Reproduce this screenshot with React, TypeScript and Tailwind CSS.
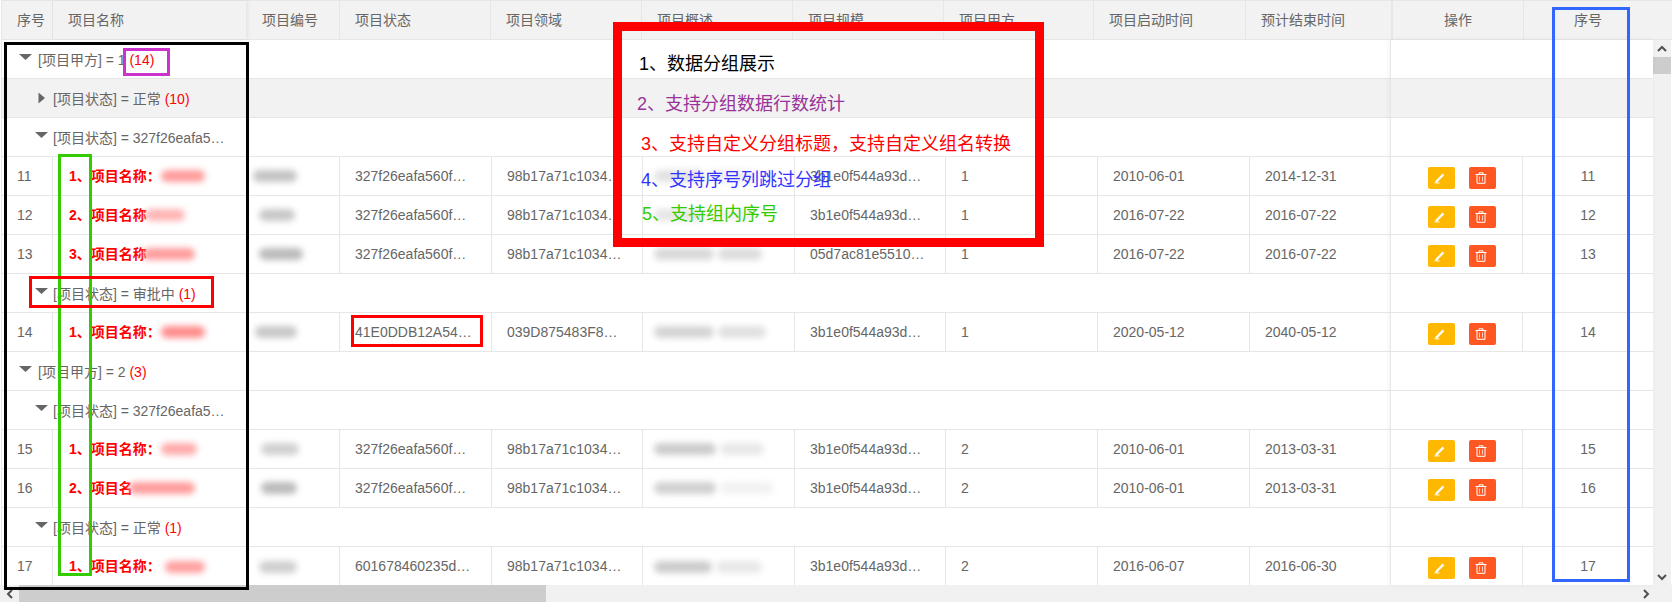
import type { ReactNode } from "react";

type Row =
  | { kind: "group"; level: 1 | 2; title: string; count?: number; closed?: boolean }
  | {
      kind: "data";
      no: number;
      index: number;
      label: string;
      nameBlob: string;
      codeBlob: string;
      status: string;
      domain: string;
      blobA: string;
      blobB: string;
      scale: string;
      party: number;
      start: string;
      end: string;
    };

const STATUS = "327f26eafa560f…";
const DOMAIN = "98b17a71c1034…";
const SCALE = "3b1e0f544a93d…";

const rows: Row[] = [
  { kind: "group", level: 1, title: "[项目甲方] = 1", count: 14 },
  { kind: "group", level: 2, title: "[项目状态] = 正常", count: 10, closed: true },
  { kind: "group", level: 2, title: "[项目状态] = 327f26eafa5…" },
  { kind: "data", no: 11, index: 1, label: "项目名称：", nameBlob: "w-[44px] bg-[#ff9c9c]", codeBlob: "ml-[6px] w-[44px] bg-[#c4c4c4]", status: STATUS, domain: DOMAIN, blobA: "w-[50px] bg-[#e2e2e2]", blobB: "w-[50px] bg-[#efefef]", scale: SCALE, party: 1, start: "2010-06-01", end: "2014-12-31" },
  { kind: "data", no: 12, index: 2, label: "项目名称", nameBlob: "-ml-[2px] w-[40px] bg-[#ffb4b4]", codeBlob: "ml-[12px] w-[36px] bg-[#c8c8c8]", status: STATUS, domain: DOMAIN, blobA: "w-[50px] bg-[#e6e6e6]", blobB: "w-[50px] bg-[#f2f2f2]", scale: SCALE, party: 1, start: "2016-07-22", end: "2016-07-22" },
  { kind: "data", no: 13, index: 3, label: "项目名称", nameBlob: "-ml-[4px] w-[52px] bg-[#ff9c9c]", codeBlob: "ml-[12px] w-[44px] bg-[#bbbbbb]", status: STATUS, domain: DOMAIN, blobA: "w-[60px] bg-[#d8d8d8]", blobB: "w-[44px] bg-[#dcdcdc]", scale: "05d7ac81e5510…", party: 1, start: "2016-07-22", end: "2016-07-22" },
  { kind: "group", level: 2, title: "[项目状态] = 审批中", count: 1 },
  { kind: "data", no: 14, index: 1, label: "项目名称：", nameBlob: "w-[44px] bg-[#ff8c8c]", codeBlob: "ml-[8px] w-[42px] bg-[#c8c8c8]", status: "41E0DDB12A54…", domain: "039D875483F8…", blobA: "w-[60px] bg-[#d4d4d4]", blobB: "w-[48px] bg-[#e0e0e0]", scale: SCALE, party: 1, start: "2020-05-12", end: "2040-05-12" },
  { kind: "group", level: 1, title: "[项目甲方] = 2", count: 3 },
  { kind: "group", level: 2, title: "[项目状态] = 327f26eafa5…" },
  { kind: "data", no: 15, index: 1, label: "项目名称：", nameBlob: "w-[36px] bg-[#ffaaaa]", codeBlob: "ml-[14px] w-[38px] bg-[#d0d0d0]", status: STATUS, domain: DOMAIN, blobA: "w-[62px] bg-[#cccccc]", blobB: "w-[44px] bg-[#e8e8e8]", scale: SCALE, party: 2, start: "2010-06-01", end: "2013-03-31" },
  { kind: "data", no: 16, index: 2, label: "项目名", nameBlob: "-ml-[4px] w-[66px] bg-[#ff9c9c]", codeBlob: "ml-[14px] w-[36px] bg-[#bbbbbb]", status: STATUS, domain: DOMAIN, blobA: "w-[62px] bg-[#d0d0d0]", blobB: "w-[54px] bg-[#f2f2f2]", scale: SCALE, party: 2, start: "2010-06-01", end: "2013-03-31" },
  { kind: "group", level: 2, title: "[项目状态] = 正常", count: 1 },
  { kind: "data", no: 17, index: 1, label: "项目名称：", nameBlob: "ml-[4px] w-[40px] bg-[#ffa0a0]", codeBlob: "ml-[12px] w-[38px] bg-[#cfcfcf]", status: "601678460235d…", domain: DOMAIN, blobA: "w-[58px] bg-[#cccccc]", blobB: "w-[46px] bg-[#e8e8e8]", scale: SCALE, party: 2, start: "2016-06-07", end: "2016-06-30" },
];

const headCols = [
  { label: "序号", width: "w-[51px]" },
  { label: "项目名称", width: "w-[194px]" },
  { label: "项目编号", width: "w-[93px]" },
  { label: "项目状态", width: "w-[151px]" },
  { label: "项目领域", width: "w-[151px]" },
  { label: "项目概述", width: "w-[151px]" },
  { label: "项目规模", width: "w-[151px]" },
  { label: "项目甲方", width: "w-[150px]" },
  { label: "项目启动时间", width: "w-[152px]" },
  { label: "预计结束时间", width: "w-[146px]" },
];

function Cell({ width, children }: { width: string; children?: ReactNode }) {
  return (
    <div className={`flex h-full shrink-0 items-center border-r border-[#e6e6e6] pl-[15px] ${width}`}>
      {children}
    </div>
  );
}

function Blob({ className }: { className: string }) {
  return <span className={`inline-block h-[12px] shrink-0 rounded-full blur-[3px] ${className}`} />;
}

function GroupTitle({ row }: { row: Extract<Row, { kind: "group" }> }) {
  return (
    <div className={`flex h-full w-[245px] items-center ${row.level === 1 ? "pl-[17px]" : "pl-[33px]"}`}>
      {row.closed ? (
        <svg width="13" height="12" viewBox="0 0 13 12" className="shrink-0">
          <polygon points="3.5,0.5 10,6 3.5,11.5" fill="#666" />
        </svg>
      ) : (
        <svg width="13" height="12" viewBox="0 0 13 12" className="-mt-[5px] shrink-0">
          <polygon points="0,3 13,3 6.5,9" fill="#666" />
        </svg>
      )}
      <span className={`pt-[3px] ${row.level === 1 ? "ml-[6px]" : "ml-[5px]"}`}>
        {row.title}
        {row.count !== undefined && (
          <>
            {" "}
            <span className="text-[#ff0000]">({row.count})</span>
          </>
        )}
      </span>
    </div>
  );
}

function MainRow({ row, last }: { row: Row; last: boolean }) {
  if (row.kind === "group") {
    return (
      <div className={`h-[39px] border-b border-[#e6e6e6] ${row.closed ? "bg-[#f2f2f2]" : "bg-white"}`}>
        <GroupTitle row={row} />
      </div>
    );
  }
  return (
    <div className={`flex h-[39px] ${last ? "" : "border-b border-[#e6e6e6]"}`}>
      <div className="flex h-full w-[51px] shrink-0 items-center border-r border-[#e6e6e6] pl-[15px]">{row.no}</div>
      <div className="flex h-full w-[194px] shrink-0 items-center overflow-hidden pl-[16px] font-bold text-[#ff0000]">
        <span className="shrink-0">
          {row.index}、{row.label}
        </span>
        <Blob className={row.nameBlob} />
      </div>
      <div className="flex h-full w-[93px] shrink-0 items-center border-r border-[#e6e6e6]">
        <Blob className={row.codeBlob} />
      </div>
      <Cell width="w-[152px]">{row.status}</Cell>
      <Cell width="w-[151px]">{row.domain}</Cell>
      <div className="flex h-full w-[152px] shrink-0 items-center gap-[4px] border-r border-[#e6e6e6] pl-[11px]">
        <Blob className={row.blobA} />
        <Blob className={row.blobB} />
      </div>
      <Cell width="w-[151px]">{row.scale}</Cell>
      <Cell width="w-[152px]">{row.party}</Cell>
      <Cell width="w-[152px]">{row.start}</Cell>
      <div className="flex h-full flex-1 items-center pl-[15px]">{row.end}</div>
    </div>
  );
}

function PencilIcon() {
  return (
    <svg width="12" height="12" viewBox="0 0 12 12">
      <path d="M1 10.5 L1.6 8.7 L8.6 1.5 L10.3 3.2 L3.3 10.2 Z" fill="#fff" />
      <rect x="0.5" y="10.4" width="5" height="1" fill="#fff" />
    </svg>
  );
}

function TrashIcon() {
  return (
    <svg width="12" height="12" viewBox="0 0 12 12" fill="none" stroke="#fff">
      <path d="M0.5 2.5 H11.5 M4 2.5 V0.8 H8 V2.5" strokeWidth="1" />
      <path d="M2 2.5 V11.3 H10 V2.5" strokeWidth="1" />
      <path d="M4.5 4.5 V9.5 M7.5 4.5 V9.5" strokeWidth="1" opacity="0.7" />
    </svg>
  );
}

function RightRow({ row, last }: { row: Row; last: boolean }) {
  if (row.kind === "group") {
    return <div className={`h-[39px] border-b border-[#e6e6e6] ${row.closed ? "bg-[#f2f2f2]" : "bg-white"}`} />;
  }
  return (
    <div className={`flex h-[39px] bg-white ${last ? "" : "border-b border-[#e6e6e6]"}`}>
      <div className="flex h-full w-[132px] shrink-0 items-center gap-[14px] border-r border-[#e6e6e6] pl-[37px] pt-[3px]">
        <button className="flex h-[22px] w-[27px] items-center justify-center rounded-[2px] bg-[#ffb800] pr-[3px]">
          <PencilIcon />
        </button>
        <button className="flex h-[22px] w-[27px] items-center justify-center rounded-[2px] bg-[#ff5722] pr-[3px]">
          <TrashIcon />
        </button>
      </div>
      <div className="flex h-full flex-1 items-center justify-center">{row.no}</div>
    </div>
  );
}

function Chevron({ dir }: { dir: "up" | "down" | "left" | "right" }) {
  const points = {
    up: "1,7 5,3 9,7",
    down: "1,3 5,7 9,3",
    left: "7,1 3,5 7,9",
    right: "3,1 7,5 3,9",
  }[dir];
  return (
    <svg width="10" height="10" viewBox="0 0 10 10" fill="none" stroke="#505050" strokeWidth="2">
      <polyline points={points} />
    </svg>
  );
}

export default function App() {
  return (
    <div className="relative h-[602px] w-[1672px] overflow-hidden bg-white font-['Liberation_Sans','Noto_Sans_CJK_SC',sans-serif] text-[14px] text-[#666]">
      {/* Header row */}
      <div className="ml-[1px] flex h-[40px] border-y border-l border-[#e6e6e6] bg-[#f2f2f2]">
        {headCols.map((col, i) => (
          <div
            key={col.label}
            className={`flex h-full shrink-0 items-center border-r border-[#e6e6e6] pl-[15px] ${col.width} ${i === 1 ? "shadow-[1px_0_4px_rgba(0,0,0,0.06)]" : ""}`}
          >
            {col.label}
          </div>
        ))}
        <div className="flex h-full w-[132px] shrink-0 items-center justify-center border-x border-[#e6e6e6]">操作</div>
        <div className="flex h-full flex-1 items-center">
          <span className="ml-[50px]">序号</span>
        </div>
      </div>

      <div className="flex h-[545px]">
        {/* Table body + fixed right columns */}
        <div className="ml-[1px] w-[1389px] shrink-0 overflow-hidden border-l border-[#e6e6e6]">
          {rows.map((row, i) => (
            <MainRow key={i} row={row} last={i === rows.length - 1} />
          ))}
        </div>
        <div className="relative w-[263px] shrink-0 overflow-hidden border-l border-[#e6e6e6] shadow-[-1px_0_6px_rgba(0,0,0,0.05)]">
          {rows.map((row, i) => (
            <RightRow key={i} row={row} last={i === rows.length - 1} />
          ))}
        </div>
        {/* Vertical scrollbar */}
        <div className="flex w-[18px] shrink-0 flex-col items-center bg-[#f1f1f1]">
          <div className="flex h-[17px] items-center">
            <Chevron dir="up" />
          </div>
          <div className="h-[17px] w-full bg-[#cdcdcd]" />
          <div className="mt-auto flex h-[17px] items-center">
            <Chevron dir="down" />
          </div>
        </div>
      </div>

      {/* Horizontal scrollbar */}
      <div className="flex h-[17px] items-center bg-[#f1f1f1]">
        <div className="flex w-[19px] shrink-0 justify-center">
          <Chevron dir="left" />
        </div>
        <div className="h-full w-[527px] bg-[#cdcdcd]" />
        <div className="ml-auto mr-[21px]">
          <Chevron dir="right" />
        </div>
      </div>

      {/* Hand-drawn annotations on top of the table */}
      <div className="absolute left-[4px] top-[42px] h-[548px] w-[245px] border-[3px] border-black" />
      <div className="absolute left-[58px] top-[154px] h-[422px] w-[34px] border-[3px] border-[#33cc00]" />
      <div className="absolute left-[123px] top-[48px] h-[28px] w-[47px] border-[3px] border-[#cc33cc]" />
      <div className="absolute left-[29px] top-[276px] h-[32px] w-[185px] border-[3px] border-[#ff0000]" />
      <div className="absolute left-[351px] top-[315px] h-[32px] w-[132px] border-[3px] border-[#ff0000]" />
      <div className="absolute left-[1552px] top-[7px] h-[575px] w-[78px] border-[3px] border-[#3366ff]" />
      <div className="absolute left-[613px] top-[22px] h-[225px] w-[431px] border-[9px] border-[#ff0000]" />
      <div className="absolute left-[639px] top-[52px] text-[18px] leading-[24px] text-black">1、数据分组展示</div>
      <div className="absolute left-[637px] top-[92px] text-[18px] leading-[24px] text-[#993399]">2、支持分组数据行数统计</div>
      <div className="absolute left-[641px] top-[132px] text-[18px] leading-[24px] text-[#ff0000]">3、支持自定义分组标题，支持自定义组名转换</div>
      <div className="absolute left-[641px] top-[168px] text-[18px] leading-[24px] text-[#3333ff]">4、支持序号列跳过分组</div>
      <div className="absolute left-[642px] top-[202px] text-[18px] leading-[24px] text-[#33cc00]">5、支持组内序号</div>
    </div>
  );
}
